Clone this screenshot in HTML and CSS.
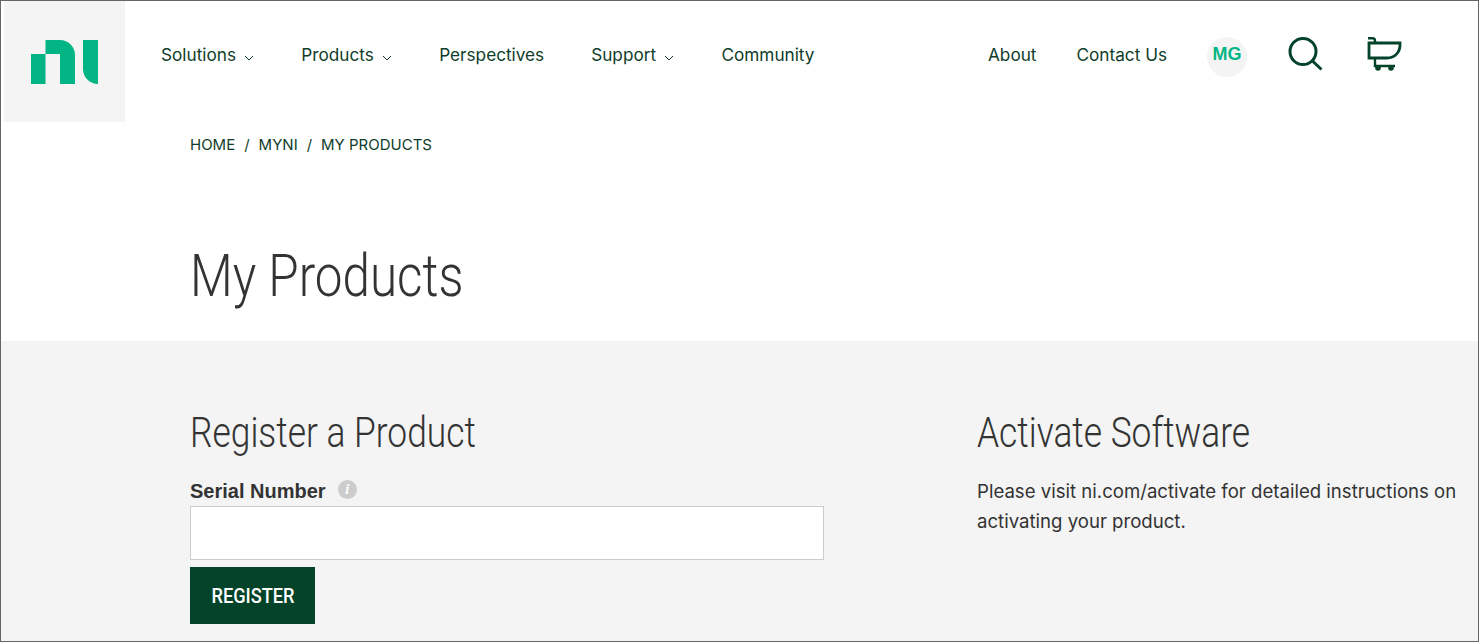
FILE: index.html
```html
<!DOCTYPE html>
<html lang="en">
<head>
<meta charset="utf-8">
<title>My Products</title>
<link rel="stylesheet" href="styles.css">
</head>
<body>
<div class="frame">
  <header class="header">
    <a class="logo" href="#" aria-label="NI">
      <svg width="67" height="44" viewBox="0 0 67 44"><path fill="#03b585" d="M0 14h14.500v30H0zM14.500 0H29c8.300 0 15 6.700 15 15v29H29V14H14.500zM52 0h15v44c-8.300 0-15-6.700-15-15z"/></svg>
    </a>
    <nav class="nav">
      <a class="nav-link" href="#">Solutions <svg class="chev" width="10" height="6" viewBox="0 0 10 6"><path d="M1 1l4 4 4-4" fill="none" stroke="#0f3d2a" stroke-width="1"/></svg></a>
      <a class="nav-link" href="#">Products <svg class="chev" width="10" height="6" viewBox="0 0 10 6"><path d="M1 1l4 4 4-4" fill="none" stroke="#0f3d2a" stroke-width="1"/></svg></a>
      <a class="nav-link" href="#">Perspectives</a>
      <a class="nav-link" href="#">Support <svg class="chev" width="10" height="6" viewBox="0 0 10 6"><path d="M1 1l4 4 4-4" fill="none" stroke="#0f3d2a" stroke-width="1"/></svg></a>
      <a class="nav-link" href="#">Community</a>
    </nav>
    <div class="utility">
      <a class="nav-link" href="#">About</a>
      <a class="nav-link" href="#">Contact Us</a>
      <span class="avatar">MG</span>
      <svg class="search" width="35" height="34" viewBox="0 0 35 34"><circle cx="15" cy="14.500" r="13" fill="none" stroke="#03432a" stroke-width="3"/><path d="M24.500 24l9 8.500" fill="none" stroke="#03432a" stroke-width="3"/></svg>
      <svg class="cart" width="35" height="34" viewBox="0 0 35 34"><path d="M1 1.200h4.500c1.500 0 2.500 1 2.500 2.500V5" fill="none" stroke="#03432a" stroke-width="2.400"/><path d="M2 6h31v2c0 7-5 13-13 13H2z" fill="none" stroke="#03432a" stroke-width="2.800"/><path d="M8 21v8h20" fill="none" stroke="#03432a" stroke-width="2.400"/><circle cx="11" cy="31" r="2.800" fill="#03432a"/><circle cx="24" cy="31" r="2.800" fill="#03432a"/></svg>
    </div>
  </header>
  <div class="breadcrumb"><a href="#">HOME</a><span>/</span><a href="#">MYNI</a><span>/</span><a href="#">MY PRODUCTS</a></div>
  <h1 class="title"><span class="cond">My Products</span></h1>
  <section class="panel">
    <div class="col-left">
      <h2 class="subtitle"><span class="cond">Register a Product</span></h2>
      <div class="label-row"><label class="label" for="sn">Serial Number</label><span class="info">i</span></div>
      <input class="input" id="sn" type="text">
      <button class="button" type="button"><span class="cond-btn">REGISTER</span></button>
    </div>
    <div class="col-right">
      <h2 class="subtitle"><span class="cond">Activate Software</span></h2>
      <p class="copy">Please visit ni.com/activate for detailed instructions on activating your product.</p>
    </div>
  </section>
</div>
</body>
</html>
```
FILE: styles.css
```css
* { box-sizing: border-box; }
html, body { margin: 0; height: 100%; overflow: hidden; }
body { font-family: "Liberation Sans", Arial, sans-serif; background: #fff; color: #333; }
a { color: inherit; text-decoration: none; }
.frame { height: 642px; border: 1px solid #666; display: flex; flex-direction: column; overflow: hidden; }
.header { display: flex; align-items: flex-start; height: 121px; padding-left: 3px; color: #0f3d2a; }
.logo { width: 121px; height: 121px; background: #f4f4f4; display: flex; align-items: center; justify-content: center; flex: none; }
.logo svg { margin-top: 1px; }
.nav { display: flex; gap: 47px; margin-left: 36px; margin-top: 44px; }
.nav-link { font-family: Inter, "Liberation Sans", sans-serif; font-size: 17.200px; line-height: 20px; color: #0f3d2a; white-space: nowrap; }
.chev { margin-left: 3.500px; vertical-align: 0; }
.utility { display: flex; align-items: flex-start; margin-left: auto; margin-top: 36px; padding-right: 76px; }
.utility .nav-link { margin-top: 8px; }
.utility .nav-link:nth-child(2) { margin-left: 40px; }
.avatar { margin-left: 40px; width: 40px; height: 40px; padding-bottom: 6px; border-radius: 50%; background: #f4f4f4; color: #03b585; font-weight: 700; font-size: 18px; display: flex; align-items: center; justify-content: center; }
.search { margin-left: 41px; }
.cart { margin-left: 44px; }
.breadcrumb { display: flex; gap: 9px; margin-left: 189px; margin-top: 14px; font-family: Inter, "Liberation Sans", sans-serif; font-size: 15px; line-height: 18px; color: #0f3d2a; }
.title { margin: 87px 0 0 189px; height: 100px; font-weight: 300; font-family: Roboto, sans-serif; font-size: 60px; line-height: 70px; color: #333; }
.cond, .cond-btn { display: inline-block; transform-origin: left center; white-space: nowrap; }
.title .cond { transform: scaleX(0.823); }
.panel { flex: 1; background: #f4f4f4; display: flex; padding: 0 0 0 189px; }
.col-left { width: 634px; }
.col-right { margin-left: 153px; width: 490px; }
.subtitle { margin: 65px 0 0; font-family: Roboto, sans-serif; font-weight: 300; font-size: 42px; line-height: 54px; color: #333; }
.subtitle .cond { transform: scaleX(0.842); }
.label-row { display: flex; align-items: center; gap: 12px; height: 22px; margin-top: 20px; }
.label { font-weight: 700; font-size: 20px; color: #333; }
.info { width: 19px; height: 19px; border-radius: 50%; background: #ccc; color: #fff; font: italic 700 14px/19px "Liberation Serif", serif; text-align: center; margin-top: -4px; }
.input { display: block; width: 634px; height: 54px; margin-top: 4px; border: 1px solid #ccc; background: #fff; }
.button { display: block; width: 125px; height: 57px; margin-top: 7px; border: 0; padding: 0; background: #03432a; color: #fff; font-family: Roboto, sans-serif; font-weight: 500; font-size: 21px; text-align: center; }
.cond-btn { transform: scaleX(0.865); transform-origin: center; }
.copy { margin: 16px 0 0; font-family: Inter, "Liberation Sans", sans-serif; font-size: 18.600px; line-height: 30px; color: #333; }
```
